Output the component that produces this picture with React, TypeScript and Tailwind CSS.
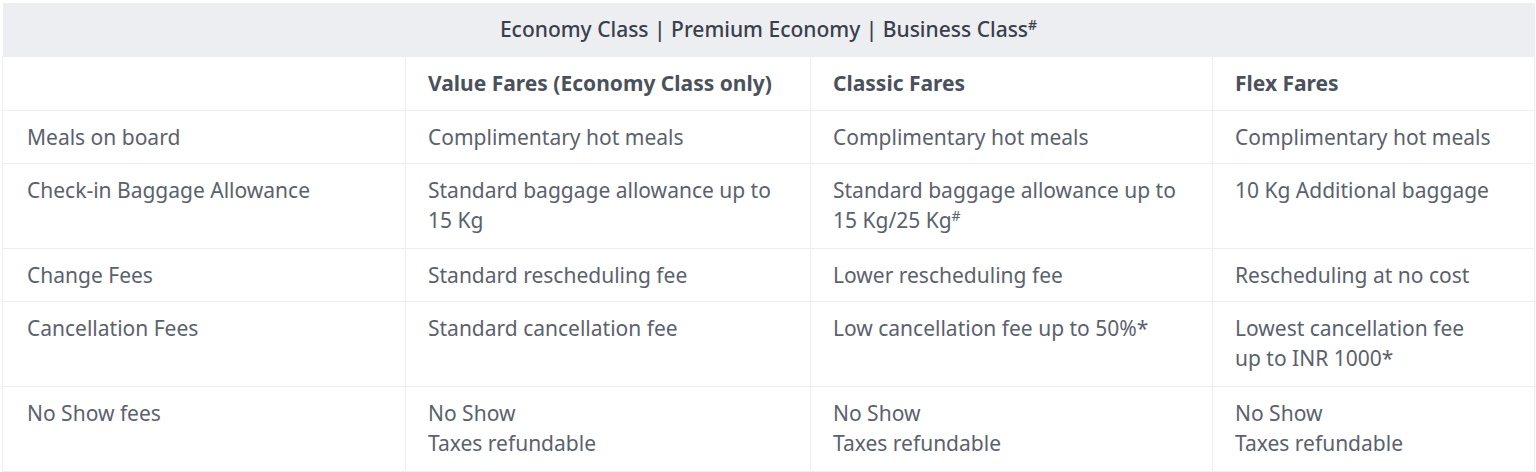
import React from 'react';

type Row = { label: string; cells: React.ReactNode[]; tall?: boolean };

const rows: Row[] = [
  {
    label: 'Meals on board',
    cells: ['Complimentary hot meals', 'Complimentary hot meals', 'Complimentary hot meals'],
  },
  {
    label: 'Check-in Baggage Allowance',
    cells: [
      <>
        Standard baggage allowance up to
        <br />
        15 Kg
      </>,
      <>
        Standard baggage allowance up to
        <br />
        15 Kg/25 Kg<sup className="text-[14px] leading-none">#</sup>
      </>,
      '10 Kg Additional baggage',
    ],
    tall: true,
  },
  {
    label: 'Change Fees',
    cells: ['Standard rescheduling fee', 'Lower rescheduling fee', 'Rescheduling at no cost'],
  },
  {
    label: 'Cancellation Fees',
    cells: [
      'Standard cancellation fee',
      'Low cancellation fee up to 50%*',
      <>
        Lowest cancellation fee
        <br />
        up to INR 1000*
      </>,
    ],
    tall: true,
  },
  {
    label: 'No Show fees',
    cells: [
      <>
        No Show
        <br />
        Taxes refundable
      </>,
      <>
        No Show
        <br />
        Taxes refundable
      </>,
      <>
        No Show
        <br />
        Taxes refundable
      </>,
    ],
    tall: true,
  },
];

const cell = 'border border-[#eceef1] px-[22px] text-left';

export default function App() {
  return (
    <div
      className="bg-white px-[2px] pt-[3px] text-[21px] leading-[30px] text-[#5b616d]"
      style={{ fontFamily: '"Noto Sans", "Open Sans", sans-serif' }}
    >
      <table className="w-[1532px] table-fixed border-collapse">
        <colgroup>
          <col className="w-[403px]" />
          <col className="w-[405px]" />
          <col className="w-[402px]" />
          <col className="w-[322px]" />
        </colgroup>
        <thead>
          <tr>
            <th colSpan={4} className="h-[53px] bg-[#edeef2] text-center align-middle font-medium text-[#3a3f4a]">
              Economy Class | Premium Economy | Business Class<sup className="text-[14px] leading-none">#</sup>
            </th>
          </tr>
          <tr className="font-bold text-[#4b515c]">
            <th className={`${cell} h-[54px] align-middle`}></th>
            <th className={`${cell} align-middle`}>Value Fares (Economy Class only)</th>
            <th className={`${cell} align-middle`}>Classic Fares</th>
            <th className={`${cell} align-middle`}>Flex Fares</th>
          </tr>
        </thead>
        <tbody>
          {rows.map((r) => (
            <tr key={r.label}>
              <td
                className={`${cell} pl-[24px] align-top ${r.tall ? 'h-[85px] pt-[11px] pb-[12px]' : 'h-[53px] pt-[11px]'}`}
              >
                {r.label}
              </td>
              {r.cells.map((c, i) => (
                <td key={i} className={`${cell} align-top pt-[11px]`}>
                  {c}
                </td>
              ))}
            </tr>
          ))}
        </tbody>
      </table>
    </div>
  );
}
